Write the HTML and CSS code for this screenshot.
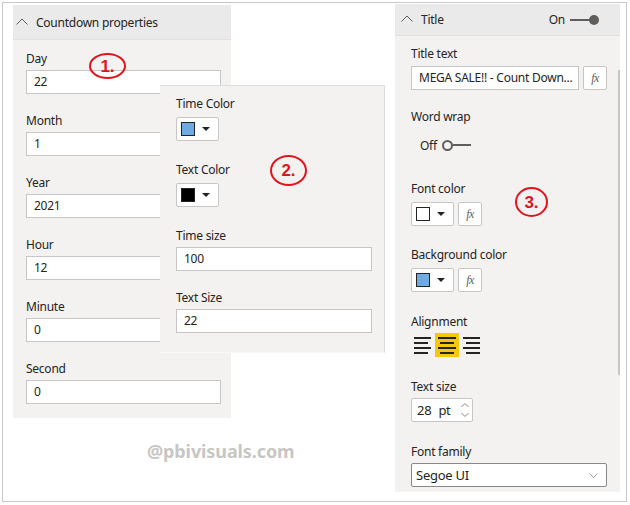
FILE: index.html
```html
<!DOCTYPE html>
<html lang="en">
<head>
<meta charset="utf-8">
<title>Countdown visual settings</title>
<link rel="stylesheet" href="styles.css">
</head>
<body>
<div class="frame">

  <section class="panel panel-countdown">
    <header class="panel-head">
      <svg class="chev" width="12" height="7" viewBox="0 0 12 7"><polyline points="0.5,6.5 6,1 11.5,6.5" fill="none" stroke="#605e5c" stroke-width="1"/></svg>
      <span class="panel-title">Countdown properties</span>
    </header>
    <div class="panel-body">
      <div class="field"><div class="label">Day</div><div class="text-input">22</div></div>
      <div class="field"><div class="label">Month</div><div class="text-input">1</div></div>
      <div class="field"><div class="label">Year</div><div class="text-input">2021</div></div>
      <div class="field"><div class="label">Hour</div><div class="text-input">12</div></div>
      <div class="field"><div class="label">Minute</div><div class="text-input">0</div></div>
      <div class="field"><div class="label">Second</div><div class="text-input">0</div></div>
    </div>
  </section>

  <section class="panel panel-format">
    <div class="panel-body">
      <div class="field field--color">
        <div class="label">Time Color</div>
        <div class="color-btn"><span class="swatch swatch--blue"></span><span class="caret"></span></div>
      </div>
      <div class="field field--color">
        <div class="label">Text Color</div>
        <div class="color-btn"><span class="swatch swatch--black"></span><span class="caret"></span></div>
      </div>
      <div class="field"><div class="label">Time size</div><div class="text-input">100</div></div>
      <div class="field"><div class="label">Text Size</div><div class="text-input">22</div></div>
    </div>
  </section>

  <section class="panel panel-title-card">
    <header class="panel-head panel-head--short">
      <svg class="chev" width="12" height="7" viewBox="0 0 12 7"><polyline points="0.5,6.5 6,1 11.5,6.5" fill="none" stroke="#605e5c" stroke-width="1"/></svg>
      <span class="panel-title">Title</span>
      <span class="head-toggle">
        <span class="toggle-text">On</span>
        <span class="toggle toggle--on"><span class="toggle-line"></span><span class="toggle-knob"></span></span>
      </span>
    </header>
    <div class="panel-body">
      <div class="field field--title">
        <div class="label">Title text</div>
        <div class="row">
          <div class="text-input text-input--title">MEGA SALE!! - Count Down...</div>
          <div class="fx-btn">fx</div>
        </div>
      </div>
      <div class="field field--wrap">
        <div class="label">Word wrap</div>
        <div class="toggle-row">
          <span class="toggle-text">Off</span>
          <span class="toggle toggle--off"><span class="toggle-knob"></span><span class="toggle-line"></span></span>
        </div>
      </div>
      <div class="field field--color">
        <div class="label">Font color</div>
        <div class="row">
          <div class="color-btn"><span class="swatch swatch--white"></span><span class="caret"></span></div>
          <div class="fx-btn">fx</div>
        </div>
      </div>
      <div class="field field--color field--gap22">
        <div class="label">Background color</div>
        <div class="row">
          <div class="color-btn"><span class="swatch swatch--blue"></span><span class="caret"></span></div>
          <div class="fx-btn">fx</div>
        </div>
      </div>
      <div class="field field--gap22">
        <div class="label">Alignment</div>
        <div class="align-row">
          <span class="align-btn">
            <svg width="24" height="24" viewBox="0 0 24 24"><g fill="#252423"><rect x="3" y="4" width="17" height="2"/><rect x="3" y="9" width="14" height="2"/><rect x="3" y="14" width="17" height="2"/><rect x="3" y="19" width="14" height="2"/></g></svg>
          </span>
          <span class="align-btn align-btn--active">
            <svg width="24" height="24" viewBox="0 0 24 24"><g fill="#252423"><rect x="3" y="4" width="18" height="2"/><rect x="5" y="9" width="14" height="2"/><rect x="3" y="14" width="18" height="2"/><rect x="5" y="19" width="14" height="2"/></g></svg>
          </span>
          <span class="align-btn">
            <svg width="24" height="24" viewBox="0 0 24 24"><g fill="#252423"><rect x="4" y="4" width="17" height="2"/><rect x="7" y="9" width="14" height="2"/><rect x="4" y="14" width="17" height="2"/><rect x="7" y="19" width="14" height="2"/></g></svg>
          </span>
        </div>
      </div>
      <div class="field field--gap22">
        <div class="label">Text size</div>
        <div class="spinner">
          <span class="spin-value">28</span><span class="spin-unit">pt</span>
          <svg class="spin-arrows" width="8" height="16" viewBox="0 0 8 16"><polyline points="0.5,5 4,1.5 7.5,5" fill="none" stroke="#8a8886" stroke-width="1"/><polyline points="0.5,11 4,14.5 7.5,11" fill="none" stroke="#8a8886" stroke-width="1"/></svg>
        </div>
      </div>
      <div class="field">
        <div class="label">Font family</div>
        <div class="dropdown">
          <span>Segoe UI</span>
          <svg width="9" height="5" viewBox="0 0 9 5"><polyline points="0.5,0.5 4.5,4.5 8.5,0.5" fill="none" stroke="#a19f9d" stroke-width="1"/></svg>
        </div>
      </div>
    </div>
    <div class="scroll-thumb"></div>
  </section>

  <div class="watermark">@pbivisuals.com</div>

  <div class="callout callout--1">1.</div>
  <div class="callout callout--2">2.</div>
  <div class="callout callout--3">3.</div>
</div>
</body>
</html>
```

FILE: styles.css
```css
* { box-sizing: border-box; }

html, body {
  margin: 0;
  padding: 0;
  background: #ffffff;
}

body {
  font-family: "Noto Sans", "Open Sans", sans-serif;
  font-size: 12px;
  letter-spacing: -0.25px;
  color: #252423;
}

.frame {
  position: relative;
  margin: 2px 0 0 2px;
  width: 625px;
  height: 500px;
  border: 1px solid #c8c8c8;
  background: #ffffff;
}

/* panels are windows on a canvas: they overlap each other */
.panel {
  position: absolute;
  background: #f3f2f1;
}

.panel-countdown {
  left: 10px;
  top: 2px;
  width: 218px;
  height: 413px;
}

.panel-format {
  left: 157px;
  top: 82px;
  width: 225px;
  height: 268px;
  border: 1px solid #dcdcdc;
  border-left: none;
  border-bottom-color: #fafafa;
}

.panel-title-card {
  left: 392px;
  top: 1px;
  width: 225px;
  height: 488px;
}

.panel-head {
  display: flex;
  align-items: center;
  height: 35px;
  padding-left: 3px;
  background: #eaeaea;
  border-bottom: 1px solid #e1dfdd;
}

.panel-head--short {
  height: 32px;
  padding-left: 6px;
  padding-right: 21px;
}

.chev {
  display: block;
  margin-right: 8px;
  margin-top: -2px;
}

.panel-title {
  font-size: 12px;
  color: #252423;
}

.head-toggle {
  margin-left: auto;
  display: flex;
  align-items: center;
}

.toggle-text {
  font-size: 12px;
  color: #252423;
}

.toggle {
  display: flex;
  align-items: center;
  margin-left: 5px;
}

.toggle-line {
  display: block;
  width: 21px;
  height: 2px;
  background: #605e5c;
}

.toggle--on .toggle-knob {
  display: block;
  width: 10px;
  height: 10px;
  border-radius: 50%;
  background: #605e5c;
  margin-left: -2px;
}

.toggle--off .toggle-knob {
  display: block;
  width: 11px;
  height: 11px;
  border-radius: 50%;
  border: 2px solid #605e5c;
  background: transparent;
}

.toggle--off .toggle-line {
  width: 18px;
}

.panel-body {
  padding: 11px 10px 0 13px;
}

.panel-format .panel-body {
  padding: 10px 12px 0 16px;
}

.panel-title-card .panel-body {
  padding: 10px 13px 0 16px;
}

.field {
  margin-bottom: 19px;
}

.label {
  line-height: 16px;
  height: 16px;
  margin-bottom: 3px;
  white-space: nowrap;
}

.field--color { margin-bottom: 21px; }
.field--color .label { margin-bottom: 5px; }
.field--gap22 { margin-bottom: 22px; }
.field--title .label { margin-bottom: 4px; }
.field--wrap { margin-bottom: 24px; }
.field--wrap .label { margin-bottom: 8px; }

.text-input {
  height: 24px;
  line-height: 22px;
  padding-left: 7px;
  background: #ffffff;
  border: 1px solid #c8c6c4;
  white-space: nowrap;
  overflow: hidden;
}

.text-input--title {
  width: 168px;
}

.row {
  display: flex;
  gap: 4px;
}

.fx-btn {
  width: 24px;
  height: 24px;
  border: 1px solid #c8c6c4;
  border-radius: 2px;
  background: #ffffff;
  display: flex;
  align-items: center;
  justify-content: center;
  font-family: "Liberation Serif", "DejaVu Serif", serif;
  font-style: italic;
  font-size: 12px;
  color: #605e5c;
  letter-spacing: -0.5px;
}

.color-btn {
  width: 43px;
  height: 24px;
  display: flex;
  align-items: center;
  padding-left: 4px;
  background: #ffffff;
  border: 1px solid #c8c6c4;
  border-radius: 2px;
}

.swatch {
  width: 14px;
  height: 14px;
  border: 1px solid #252423;
}

.swatch--blue { background: #6fabe2; }
.swatch--black { background: #000000; }
.swatch--white { background: #ffffff; }

.caret {
  width: 0;
  height: 0;
  margin-left: 7px;
  border-left: 4px solid transparent;
  border-right: 4px solid transparent;
  border-top: 4px solid #252423;
}

.toggle-row {
  display: flex;
  align-items: center;
  height: 24px;
  padding-left: 9px;
}

.toggle-row .toggle {
  margin-left: 5px;
}

.align-row {
  display: flex;
  height: 24px;
}

.align-btn {
  width: 24px;
  height: 24px;
  display: block;
}

.align-btn svg { display: block; }

.align-btn--active {
  background: #f2c811;
}

.spinner {
  width: 62px;
  height: 24px;
  display: flex;
  align-items: center;
  padding-left: 5px;
  background: #ffffff;
  border: 1px solid #c8c6c4;
  border-radius: 2px;
  font-size: 13px;
}

.spin-unit { margin-left: 7px; }

.spin-arrows {
  margin-left: auto;
  margin-right: 3px;
  display: block;
}

.dropdown {
  height: 24px;
  display: flex;
  align-items: center;
  justify-content: space-between;
  padding: 0 8px 0 4px;
  background: #ffffff;
  border: 1px solid #8a8886;
  border-radius: 2px;
  font-size: 13px;
}

.dropdown svg { display: block; }

.scroll-thumb {
  position: absolute;
  right: 0;
  top: 66px;
  width: 2px;
  height: 305px;
  background: #c8c6c4;
}

.watermark {
  position: absolute;
  left: 144px;
  top: 436px;
  font-size: 18px;
  font-weight: 700;
  letter-spacing: -0.1px;
  color: #c8c6c4;
  line-height: 24px;
}

/* hand-drawn annotation circles overlaying the screenshot */
.callout {
  position: absolute;
  display: flex;
  align-items: center;
  justify-content: center;
  border: 2px solid #e3131b;
  border-radius: 50%;
  color: #e3131b;
  font-family: "Liberation Sans", Arial, sans-serif;
  font-weight: 700;
  font-size: 17px;
  letter-spacing: 0;
  line-height: 1;
}

.callout--1 { left: 86px; top: 50px; width: 37px; height: 26px; }
.callout--2 { left: 267px; top: 152px; width: 37px; height: 31px; }
.callout--3 { left: 512px; top: 184px; width: 33px; height: 30px; }
```
